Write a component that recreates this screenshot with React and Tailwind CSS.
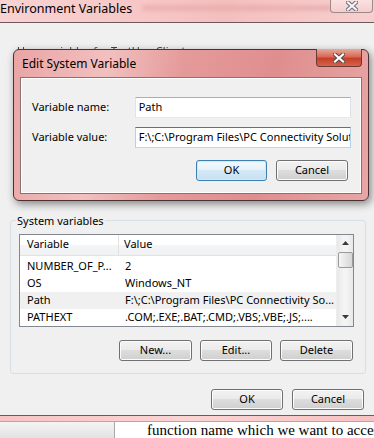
import React from "react";

const ui = "font-['Segoe_UI','Noto_Sans',Roboto,sans-serif]";

function WinButton({ children, focused, className = "" }) {
  return (
    <div
      className={`flex items-center justify-center h-[21px] rounded-[3px] border text-[11px] text-black ${
        focused
          ? "border-[#3c7fb1] bg-[linear-gradient(#f3f9fd_0%,#e6f2fa_45%,#d4e8f6_50%,#c8e0f2_100%)] shadow-[inset_0_0_0_1px_#cfe9fa]"
          : "border-[#707070] bg-[linear-gradient(#f2f2f2_0%,#ebebeb_45%,#dddddd_50%,#cfcfcf_100%)] shadow-[inset_0_0_0_1px_#fcfcfc]"
      } ${className}`}
    >
      {children}
    </div>
  );
}

function CloseGlyph({ color = "#fff", stroke = "#5a4848" }) {
  return (
    <svg width="12" height="10" viewBox="0 0 12 10">
      <path d="M2 1.5 L10 8.5 M10 1.5 L2 8.5" stroke={stroke} strokeWidth="4.2" strokeLinecap="square" />
      <path d="M2 1.5 L10 8.5 M10 1.5 L2 8.5" stroke={color} strokeWidth="2.2" strokeLinecap="square" />
    </svg>
  );
}

const rows = [
  ["NUMBER_OF_P...", "2"],
  ["OS", "Windows_NT"],
  ["Path", "F:\\;C:\\Program Files\\PC Connectivity So..."],
  ["PATHEXT", ".COM;.EXE;.BAT;.CMD;.VBS;.VBE;.JS;...."],
];

function SystemList() {
  return (
    <div className="w-[335px] h-[93px] border border-[#828790] bg-white flex overflow-hidden">
      <div className="w-[316px] flex flex-col">
        <div className="h-[23px] flex border-b border-[#e2e3e5] bg-[linear-gradient(#ffffff_0%,#ffffff_50%,#f4f5f7_51%,#f0f1f3_100%)] text-[11px]">
          <div className="w-[99px] border-r border-[#e1e2e4] pl-[7px] flex items-center text-black">Variable</div>
          <div className="flex-1 pl-[5px] flex items-center text-black">Value</div>
        </div>
        <div className="pt-[2px] flex flex-col">
          {rows.map(([k, v], i) => (
            <div
              key={k}
              className={`h-[17px] flex items-center text-[11px] text-black whitespace-nowrap ${
                i === 2 ? "bg-[#f0f0f0]" : ""
              }`}
            >
              <div className="w-[100px] pl-[7px]">{k}</div>
              <div className="flex-1 pl-[5px] overflow-hidden">{v}</div>
            </div>
          ))}
        </div>
      </div>
      <div className="w-[17px] flex flex-col items-center bg-[linear-gradient(90deg,#e8e8e8,#f4f4f4_40%,#f4f4f4_60%,#e8e8e8)] border-l border-[#ededed]">
        <div className="h-[17px] flex items-center justify-center">
          <svg width="7" height="4" viewBox="0 0 7 4"><path d="M0 4 L3.5 0 L7 4 Z" fill="#3a3a3a" /></svg>
        </div>
        <div className="w-[15px] h-[16px] rounded-[2px] border border-[#9a9a9a] bg-[linear-gradient(90deg,#f6f6f6,#e6e6e6_50%,#d6d6d6)]" />
        <div className="flex-1" />
        <div className="h-[17px] flex items-center justify-center">
          <svg width="7" height="4" viewBox="0 0 7 4"><path d="M0 0 L3.5 4 L7 0 Z" fill="#3a3a3a" /></svg>
        </div>
      </div>
    </div>
  );
}

function EditDialog() {
  return (
    <div className="absolute left-[13px] top-[49px] w-[356px] h-[152px] rounded-[6px] border border-[#4a3232] bg-[linear-gradient(100deg,#eaa4a4_0%,#f2c0c0_25%,#e59a9a_45%,#df8e8e_70%,#e8a6a6_100%)] shadow-[2px_3px_8px_rgba(0,0,0,0.45)] flex flex-col">
      <div className="h-[27px] flex items-center pl-[8px] text-[12px] text-black">Edit System Variable</div>
      <div className="absolute right-[6px] top-[-1px] w-[46px] h-[18px] rounded-b-[4px] border border-[#6b3a32] border-t-0 bg-[linear-gradient(#e9a99c_0%,#d86a55_45%,#c4402a_55%,#d9624a_100%)] flex items-center justify-center">
        <CloseGlyph />
      </div>
      <div className="mx-[6px] mb-[6px] flex-1 border border-[#8a7070] bg-[#f0f0f0] shadow-[inset_0_0_0_1px_#ffffff] pt-[19px] pl-[11px] pr-[10px] flex flex-col text-[11px] text-black">
        <div className="flex items-center h-[21px]">
          <div className="w-[103px]">Variable name:</div>
          <div className="w-[217px] h-[21px] border border-[#abadb3] border-l-[#e2e3ea] border-r-[#dbdfe6] border-b-[#e3e9ef] bg-white flex items-center pl-[3px]">Path</div>
        </div>
        <div className="flex items-center h-[21px] mt-[9px]">
          <div className="w-[103px]">Variable value:</div>
          <div className="w-[217px] h-[21px] border border-[#3d7bad] border-b-[#b7d9ed] border-l-[#b5cfe7] border-r-[#b5cfe7] bg-white flex items-center pl-[2px] overflow-hidden whitespace-nowrap">
            <span className="inline-block w-[1px] h-[13px] mr-[1px] bg-[repeating-linear-gradient(#222_0,#222_2px,#e8c050_2px,#e8c050_4px)]" />
            F:\;C:\Program Files\PC Connectivity Solutions\
          </div>
        </div>
        <div className="flex justify-end gap-[9px] mt-[12px] pr-[3px]">
          <WinButton focused className="w-[71px]">OK</WinButton>
          <WinButton className="w-[72px]">Cancel</WinButton>
        </div>
      </div>
    </div>
  );
}

export default function App() {
  return (
    <div className={`relative w-[374px] h-[438px] overflow-hidden bg-[#f0f0f0] flex flex-col ${ui}`}>
      {/* outer title bar */}
      <div className="relative h-[23px] border-b border-[#6e5a5a] bg-[linear-gradient(90deg,#f9d2d2_0%,#f7c6c6_40%,#f5bebe_60%,#f8cfcf_100%)] flex items-center">
        <span className="text-[12.5px] text-black leading-none pb-[4px] whitespace-nowrap">Environment Variables</span>
        <div className="ml-[10px] mb-[6px] w-[200px] h-[4px] rounded-full bg-[#e7a9a9] blur-[2px]" />
        <div className="absolute right-[1px] top-[-1px] w-[43px] h-[14px] rounded-b-[4px] border border-[#9c8a8a] border-t-0 bg-[linear-gradient(#fbe2e2,#f6cccc)] flex items-center justify-center">
          <CloseGlyph color="#f4f4f4" stroke="#6f6f7a" />
        </div>
      </div>

      {/* body */}
      <div className="h-[399px] flex flex-col">
        <div className="h-[191px] pt-[21px] pl-[17px]">
          <div className="text-[11px] leading-[14px] text-[#444] blur-[0.6px] whitespace-nowrap">User variables for TestUserClient</div>
        </div>
        <fieldset className="ml-[10px] w-[356px] h-[160px] border border-[#d5dfe5] rounded-[3px]">
          <legend className="ml-[5px] px-[1px] text-[11px] leading-[14px] text-black">System variables</legend>
          <div className="pl-[8px] pt-[6px] flex flex-col">
            <SystemList />
            <div className="flex gap-[8px] mt-[13px] pl-[100px]">
              <WinButton className="w-[73px]">New...</WinButton>
              <WinButton className="w-[72px]">Edit...</WinButton>
              <WinButton className="w-[73px]">Delete</WinButton>
            </div>
          </div>
        </fieldset>
        <div className="flex justify-end gap-[9px] mt-[15px] pr-[10px]">
          <WinButton className="w-[72px]">OK</WinButton>
          <WinButton className="w-[72px]">Cancel</WinButton>
        </div>
      </div>

      {/* bottom frame + page behind */}
      <div className="h-[6px] border-t border-[#6e5a5a] bg-[linear-gradient(90deg,#f7c4c4,#fbd4d4_50%,#f6c2c2)]" />
      <div className="flex-1 flex border-t border-[#b8a6a6]">
        <div className="w-[115px] border-r border-[#a8a8a8] bg-[linear-gradient(#f4f4f4,#e2e2e2)]" />
        <div className="flex-1 bg-white pl-[32px] overflow-hidden whitespace-nowrap">
          <div className="font-['Liberation_Serif',serif] text-[15px] leading-[16px] text-black">
            function name which we want to access
          </div>
        </div>
      </div>

      <EditDialog />
    </div>
  );
}
